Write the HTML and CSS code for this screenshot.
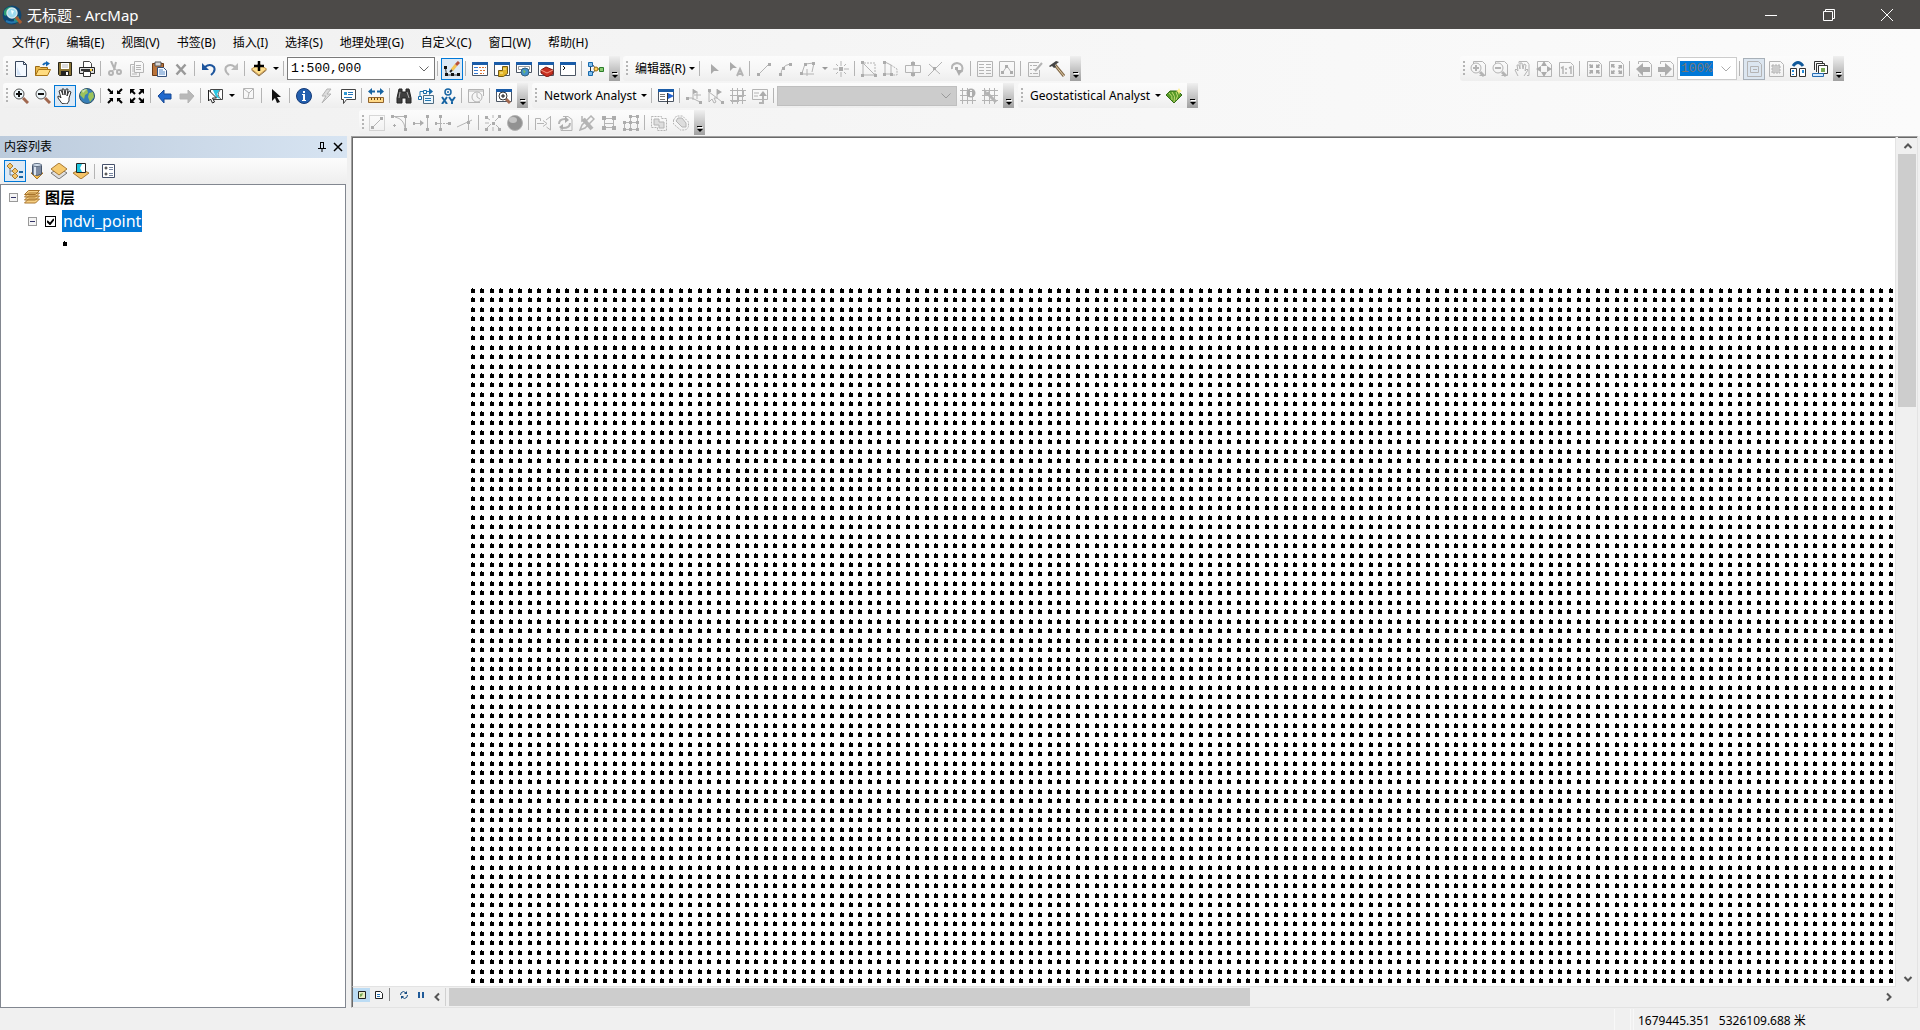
FILE: index.html
```html
<!DOCTYPE html>
<html lang="zh-CN">
<head>
<meta charset="utf-8">
<title>无标题 - ArcMap</title>
<link rel="stylesheet" href="styles.css">
</head>
<body>
<header class="titlebar">
  <svg class="app-icon" viewBox="0 0 20 20"><circle cx="10" cy="10" r="9.500" fill="#0d4672"/><path d="M2 6q4-5 8-4l-3 4-3 5-2-1zM12 14l5-3-1 6-4 1z" fill="#2a9a72"/><path d="M4 16q6 3 10 0" stroke="#2777b0" stroke-width="2"/><circle cx="10" cy="8" r="5" fill="#9edcf0" stroke="#d4e8ec" stroke-width="1.500"/><path d="M9 5l3 1-2 4z" fill="#f4ffff"/><path d="M14 12l5 6" stroke="#a85e34" stroke-width="3"/></svg>
  <h1>无标题 - ArcMap</h1>
  <div class="window-buttons">
    <button aria-label="最小化"><svg viewBox="0 0 12 12"><path d="M0 6.500h12"/></svg></button>
    <button aria-label="还原"><svg viewBox="0 0 12 12"><path d="M.5 2.500h9v9h-9zM2.500 2V.5h9v9H10"/></svg></button>
    <button aria-label="关闭"><svg viewBox="0 0 12 12"><path d="M0 0l12 12M12 0L0 12"/></svg></button>
  </div>
</header>

<nav class="menubar">
  <button>文件(F)</button><button>编辑(E)</button><button>视图(V)</button><button>书签(B)</button><button>插入(I)</button><button>选择(S)</button><button>地理处理(G)</button><button>自定义(C)</button><button>窗口(W)</button><button>帮助(H)</button>
</nav>

<section class="docks">
  <div class="dock">
    <div class="toolbar">
      <span class="grip"></span>
      <button class="tool" aria-label="新建"><svg viewBox="0 0 16 16"><path d="M2.500.5h8l3 3v12h-11z" fill="#f4f9ff" stroke="#39475c"/><path d="M10.500.5v3h3" stroke="#39475c"/><path d="M4 14V6l4 8z" fill="#d4e4f7"/></svg></button>
      <button class="tool" aria-label="打开"><svg viewBox="0 0 16 16"><path d="M.5 14.500v-9h4l1 1h7v3" fill="#e9b94d" stroke="#9b6a14"/><path d="M.5 14.500l3-6h12l-3 6z" fill="#ffdc80" stroke="#a87417"/><path d="M8 4q1-2 4-2" stroke="#1266b4" stroke-width="2"/><path d="M11 0l4 2.500-4 3z" fill="#1266b4"/></svg></button>
      <button class="tool" aria-label="保存"><svg viewBox="0 0 16 16"><path d="M1.500 1.500h13v13h-12l-1-1z" fill="#8b7536" stroke="#28251a"/><path d="M4 2h8v6H4z" fill="#fff"/><path d="M5 4h6M5 6h6" stroke="#b9b9b9"/><path d="M4 10h8v4H4z" fill="#222"/><path d="M9 11h2v3H9z" fill="#fff"/></svg></button>
      <button class="tool" aria-label="打印"><svg viewBox="0 0 16 16"><path d="M4.500 7V.5h6l2 2V7" fill="#fff" stroke="#444"/><path d="M.5 6.500h15v6H.5z" fill="#ddd" stroke="#222"/><path d="M2 9h12" stroke="#333" stroke-width="2"/><path d="M11 8h2v2h-2z" fill="#f5cf46"/><path d="M4.500 10.500h7v5h-7z" fill="#fff" stroke="#333"/></svg></button>
      <span class="sep"></span>
      <button class="tool" disabled aria-label="剪切"><svg viewBox="0 0 16 16"><path d="M4 0l4 9M9 1L7 9" stroke-width="2"/><circle cx="4" cy="12" r="2" stroke-width="2"/><circle cx="12" cy="11" r="2" stroke-width="2"/><path d="M5 10l3-2 3 2"/></svg></button>
      <button class="tool" disabled aria-label="复制"><svg viewBox="0 0 16 16"><path d="M5.500.5h7l2 2v9h-9zM5 3.500H1.500v12h9V12M3 6h2M3 8h2M3 10h2M7 4.500h5M7 6.500h5M7 8.500h5M3 13h5"/></svg></button>
      <button class="tool" aria-label="粘贴"><svg viewBox="0 0 16 16"><path d="M1.500 2.500h11v12h-11z" fill="#b9733a" stroke="#6b3b16"/><path d="M4 1h6v4H4z" fill="#d9d9d9" stroke="#555"/><path d="M6.500 6.500h6l3 3v6h-9z" fill="#f4f9ff" stroke="#35507a"/><path d="M8 9h4M8 11h6M8 13h6" stroke="#5b8cc8"/></svg></button>
      <button class="tool" disabled aria-label="删除"><svg viewBox="0 0 16 16"><path d="M3.500 3.500l9 10M12.500 3.500l-9 10" stroke="#999" stroke-width="2.500"/></svg></button>
      <span class="sep"></span>
      <button class="tool" aria-label="撤消"><svg viewBox="0 0 16 16"><path d="M4 6q5-4 9 0 2 4-3 8" stroke="#1d559d" stroke-width="2"/><path d="M1 2v7h7z" fill="#1d559d"/></svg></button>
      <button class="tool" disabled aria-label="重做"><svg viewBox="0 0 16 16"><path d="M12 6q-5-4-9 0-2 4 3 8" stroke-width="2"/><path d="M15 2v7H8z" fill="#bbb" stroke="none"/></svg></button>
      <span class="sep"></span>
      <button class="tool" aria-label="添加数据"><svg viewBox="0 0 16 16"><path d="M.5 8L8 3l7.500 5L8 14z" fill="#ffdf8d" stroke="#c39347"/><path d="M.5 9L8 15l7.500-6" stroke="#8d6b3b"/><path d="M8 0v10M3 5h10" stroke="#000" stroke-width="2.500"/></svg></button>
      <button class="drop" aria-label="添加数据选项"></button>
      <span class="sep"></span>
      <select class="combo scale" aria-label="比例尺"><option>1:500,000</option></select>
      <span class="sep"></span>
      <button class="tool on" aria-label="编辑器工具条"><svg viewBox="0 0 16 16"><path d="M1.500 7l1 7h11" stroke="#444"/><path d="M0 5h3v3H0zM1 12h3v3H1zM7 12h3v3H7zM13 12h3v3h-3z" fill="#111"/><path d="M8 9l4-5" stroke="#f4c454" stroke-width="3"/><path d="M12 4l3-3" stroke="#b85038" stroke-width="3"/><path d="M6 11l2-2" stroke="#222" stroke-width="2"/></svg></button>
      <span class="sep"></span>
      <button class="tool" aria-label="内容列表"><svg viewBox="0 0 16 16"><path class="win" d="M.5 1.500h15v13H.5z"/><path class="bar" d="M0 2.500h16"/><path d="M2 6.500h4M2 9.500h4M2 12.500h4" stroke="#3478d0"/><path d="M7 6.500h7M8 9.500h6M8 12.500h4" stroke="#d87334" stroke-dasharray="2 1"/></svg></button>
      <button class="tool" aria-label="目录"><svg viewBox="0 0 16 16"><path class="win" d="M.5 1.500h15v13H.5z"/><path class="bar" d="M0 2.500h16"/><path d="M4.500 9.500h4v-4h5v7l-4 3h-5z" fill="#e3b62b" stroke="#755b12"/><path d="M9 8h3M6 12h3" stroke="#fff3a8"/></svg></button>
      <button class="tool" aria-label="搜索"><svg viewBox="0 0 16 16"><path class="win" d="M.5 1.500h15v10H.5z"/><path class="bar" d="M0 2.500h16"/><path d="M2.500 5.500h11v3h-11z" fill="#fff" stroke="#999"/><circle cx="9" cy="11" r="4" fill="#4391ca" stroke="#32617f"/><path d="M7 9l3 1-2 3z" fill="#72bc68"/></svg></button>
      <button class="tool" aria-label="工具箱"><svg viewBox="0 0 16 16"><path class="win" d="M.5 1.500h15v13H.5z"/><path class="bar" d="M0 2.500h16"/><path d="M3 9l5-3 7 3v4l-6 3-6-4z" fill="#c92f20" stroke="#7f1a13"/><path d="M3 9l6 3 6-3" stroke="#f49b84"/></svg></button>
      <button class="tool" aria-label="Python"><svg viewBox="0 0 16 16"><path class="win" d="M.5 1.500h15v13H.5z"/><path class="bar" d="M0 2.500h16"/><path d="M3 5l2 2-2 2" stroke="#111"/></svg></button>
      <span class="sep"></span>
      <button class="tool" aria-label="模型构建器"><svg viewBox="0 0 16 16"><path d="M2.500 3v10M4 3l4 5h4M4 13l4-5" stroke="#333"/><path d="M.5 1.500h4v4h-4zM.5 10.500h4v4h-4z" fill="#83bdea" stroke="#176aad"/><circle cx="8" cy="8" r="2" fill="#ffd05a" stroke="#9a6c0e"/><path d="M11.500 6.500h4v4h-4z" fill="#8acc73" stroke="#2a7c28"/></svg></button>
      <button class="more" aria-label="工具条选项"></button>
    </div>
    <div class="toolbar">
      <span class="grip"></span>
      <button class="label editor">编辑器(R)</button>
      <span class="sep"></span>
      <button class="tool" disabled aria-label="编辑工具"><svg viewBox="0 0 16 16"><path d="M5 3v10l3-3h5z" fill="#aaa" stroke="none"/></svg></button>
      <button class="tool" disabled aria-label="编辑注记"><svg viewBox="0 0 16 16"><path d="M2 1v9l3-3h4z" fill="#aaa" stroke="none"/><path d="M9 15l3-7 3 7M10 13h4" stroke-width="2"/></svg></button>
      <span class="sep"></span>
      <button class="tool" disabled aria-label="直线段"><svg viewBox="0 0 16 16"><path d="M3 13L13 3"/><path class="node" d="M1 12h3v3H1zM12 2h3v3h-3z"/></svg></button>
      <button class="tool" disabled aria-label="弧段"><svg viewBox="0 0 16 16"><path d="M3 13Q3 5 12 3"/><path class="node" d="M1 12h3v3H1zM11 2h3v3h-3zM4 6h3v3H4z"/></svg></button>
      <button class="tool" disabled aria-label="追踪"><svg viewBox="0 0 16 16"><path d="M2 12l3-9 9-1-2 9M1 13h13M7 8v7"/><path class="node" d="M0 11h3v3H0zM4 2h3v3H4zM12 1h3v3h-3z"/></svg></button>
      <button class="drop" disabled aria-label="构造工具"></button>
      <button class="tool" disabled aria-label="点"><svg viewBox="0 0 16 16"><path class="node" d="M6 6h4v4H6z"/><path d="M8 0v5M8 11v5M0 8h5M11 8h5M3 3l2 2M11 11l2 2M13 3l-2 2M3 13l2-2"/></svg></button>
      <span class="sep"></span>
      <button class="tool" disabled aria-label="编辑折点"><svg viewBox="0 0 16 16"><path d="M2 2v12h12zM2 2l12 12"/><path d="M3 2h11v11" stroke-dasharray="2 1"/><path class="node" d="M0 0h3v3H0zM0 13h3v3H0zM13 13h3v3h-3z"/></svg></button>
      <button class="tool" disabled aria-label="整形要素"><svg viewBox="0 0 16 16"><path d="M2 1v12h6V4z"/><path d="M8 4l6 4v6H8" stroke-dasharray="2 1"/><path class="node" d="M0 0h3v3H0zM0 12h3v3H0zM7 12h3v3H7z"/></svg></button>
      <button class="tool" disabled aria-label="裁剪面"><svg viewBox="0 0 16 16"><path d="M.5 4.500h15v7H.5zM8 0v16"/><path class="node" d="M6 1h4v3H6zM6 12h4v3H6z"/></svg></button>
      <button class="tool" disabled aria-label="分割"><svg viewBox="0 0 16 16"><path d="M1 15L15 1M2 3l11 10"/><path class="node" d="M6 6h3v3H6z"/></svg></button>
      <button class="tool" disabled aria-label="旋转"><svg viewBox="0 0 16 16"><path d="M3 8q-1-5 5-6 7 1 5 8l-3 2" stroke-width="2"/><path class="node" d="M7 9h6l-3 6zM6 6h3v3H6z"/></svg></button>
      <span class="sep"></span>
      <button class="tool" disabled aria-label="属性"><svg viewBox="0 0 16 16"><path d="M.5.5h15v15H.5zM2 3.500h5M2 6.500h5M2 9.500h5M2 12.500h5M9 3.500h5M9 6.500h5M9 9.500h5M9 12.500h5"/></svg></button>
      <button class="tool" disabled aria-label="草图属性"><svg viewBox="0 0 16 16"><path d="M.5.5h15v15H.5zM4 11l4-6 4 6"/><path class="node" d="M2 10h3v3H2zM6 4h3v3H6zM11 10h3v3h-3z"/></svg></button>
      <span class="sep"></span>
      <button class="tool" disabled aria-label="创建要素"><svg viewBox="0 0 16 16"><path d="M12 1.500H1.500v14h11V9M3 4.500h2M3 8.500h2M3 12.500h2M6 4.500h4M6 8.500h3M6 12.500h5"/><path d="M8 10l7-8" stroke-width="2"/></svg></button>
      <button class="tool" aria-label="工具"><svg viewBox="0 0 16 16"><path d="M6 4l9 11" stroke="#846a4a" stroke-width="3"/><path d="M6 4l9 11" stroke="#e5d4b0"/><path d="M0 5l7-5 3 1-4 3 1 2-2 1-2-2-2 1z" fill="#454545"/></svg></button>
      <button class="more" aria-label="工具条选项"></button>
    </div>
    <div class="toolbar layout-bar">
      <span class="grip"></span>
      <button class="tool" disabled aria-label="放大布局"><svg viewBox="0 0 16 16"><path d="M3.500 3V.5h9l3 3v11h-6"/><circle cx="6" cy="7" r="5"/><path d="M3 7h6M6 4v6" stroke-width="2"/><path d="M10 11l4 4" stroke-width="3"/></svg></button>
      <button class="tool" disabled aria-label="缩小布局"><svg viewBox="0 0 16 16"><path d="M3.500 3V.5h9l3 3v11h-6"/><circle cx="6" cy="7" r="5"/><path d="M3 7h6" stroke-width="2"/><path d="M10 11l4 4" stroke-width="3"/></svg></button>
      <button class="tool" disabled aria-label="平移布局"><svg viewBox="0 0 16 16"><path d="M5 2.500V.5h8l2 3v11h-2M4 15L1 9l1-1 2 2-1-6h2l1 4V2h2l1 6 1-5 2 1-1 6 2-2 1 1-4 6"/></svg></button>
      <button class="tool" disabled aria-label="缩放整个页面"><svg viewBox="0 0 16 16"><path d="M1.500.5h11l3 3v12h-14z"/><path class="node" d="M5 5l3-5 3 5zM5 11l3 5 3-5zM5 5L0 8l5 3zM11 5l5 3-5 3z"/></svg></button>
      <button class="tool" disabled aria-label="1:1"><svg viewBox="0 0 16 16"><path d="M1.500 1.500h11l3 3v11h-14z"/><path d="M3 7l2-1v7M11 7l2-1v7M8 7v2M8 11v2" stroke-width="1.500"/></svg></button>
      <span class="sep"></span>
      <button class="tool" disabled aria-label="固定比例放大"><svg viewBox="0 0 16 16"><path d="M1.500.5h11l3 3v12h-14z"/><path class="node" d="M7 3v4H3l1-1-1-2 1-1 2 1zM10 3v4h4l-1-1 1-2-1-1-2 1zM7 13V9H3l1 1-1 2 1 1 2-1zM10 13V9h4l-1 1 1 2-1 1-2-1z"/></svg></button>
      <button class="tool" disabled aria-label="固定比例缩小"><svg viewBox="0 0 16 16"><path d="M1.500.5h11l3 3v12h-14z"/><path class="node" d="M3 3h4L6 4l1 2-1 1-2-1-1 1zM14 4v4l-1-1-2 1-1-1 1-2-1-1zM3 13V9l1 1 2-1 1 1-1 2 1 1zM14 13h-4l1-1-1-2 1-1 2 1 1-1z"/></svg></button>
      <span class="sep"></span>
      <button class="tool" disabled aria-label="上一范围"><svg viewBox="0 0 16 16"><path d="M2.500 3V.5h10l3 3v12h-13V13"/><path class="node" d="M0 8l7-6v4h7v5H7v4z"/></svg></button>
      <button class="tool" disabled aria-label="下一范围"><svg viewBox="0 0 16 16"><path d="M2.500 3V.5h10l3 3v12h-13V13"/><path class="node" d="M14 8L7 2v4H0v5h7v4z"/></svg></button>
      <select class="combo percent" disabled aria-label="缩放百分比"><option>100%</option></select>
      <span class="sep"></span>
      <button class="tool on-disabled" disabled aria-label="切换描绘模式"><svg viewBox="0 0 16 16"><path d="M1.500.5h11l3 3v12h-14zM4.500 5.500h8v6h-8zM7 8.500h4"/></svg></button>
      <button class="tool" disabled aria-label="焦点数据框"><svg viewBox="0 0 16 16"><path d="M1.500.5h11l3 3v12h-14z"/><path d="M4 4h8v8H4z" fill="#ccc" stroke-dasharray="2 1"/></svg></button>
      <button class="tool" aria-label="更改布局"><svg viewBox="0 0 16 16"><path d="M3 5q5-7 10 0" stroke="#12599a" stroke-width="3"/><path d="M.5 7.500h6v8h-6zM9.500 7.500h6v8h-6z" fill="#fff" stroke="#333"/><path d="M2 9h2v2H2zM2 13h2v1H2zM12 9h2v3h-2z" fill="#268ad8"/></svg></button>
      <button class="tool" aria-label="数据驱动页面"><svg viewBox="0 0 16 16"><path d="M2.500 9V.5h8V3M4.500 11V2.500h8V5" stroke="#333"/><path d="M6.500 4.500h9v8h-9z" fill="#fff" stroke="#333"/><path d="M9 7h4v4H9z" fill="#79a953"/><path d="M.5 12.500h11v3H.5z" fill="#d2e9ff" stroke="#286db1"/></svg></button>
      <button class="more" aria-label="工具条选项"></button>
    </div>
  </div>

  <div class="dock second">
    <div class="toolbar">
      <span class="grip"></span>
      <button class="tool" aria-label="放大"><svg viewBox="0 0 16 16"><path d="M10 10l5 5" stroke="#a0674e" stroke-width="3"/><circle cx="6" cy="6" r="5" fill="#eef7fb" stroke="#555"/><path d="M3 6h6M6 3v6" stroke="#111" stroke-width="2"/></svg></button>
      <button class="tool" aria-label="缩小"><svg viewBox="0 0 16 16"><path d="M10 10l5 5" stroke="#a0674e" stroke-width="3"/><circle cx="6" cy="6" r="5" fill="#eef7fb" stroke="#555"/><path d="M3 6h6" stroke="#111" stroke-width="2"/></svg></button>
      <button class="tool on" aria-label="平移"><svg viewBox="0 0 16 16"><path d="M5 15.500L1 10V8l2 1 1 1-2-7 2-1 2 5-1-6h2l1 6 1-6h2l-1 7 2-5 2 1-2 6v3l-2 3z" fill="#fff" stroke="#333"/></svg></button>
      <button class="tool" aria-label="全图"><svg viewBox="0 0 16 16"><circle cx="8" cy="8" r="7.500" fill="#377fb8" stroke="#2f526a"/><path d="M3 2l5-1 1 4-3 2-1 4-4-4zM10 5l4-1 1 5-4 5-2-5z" fill="#9cc35b"/><path d="M3 3q2-2 5-2L4 5z" fill="#fff" opacity=".5"/></svg></button>
      <span class="sep"></span>
      <button class="tool" aria-label="固定比例放大"><svg viewBox="0 0 16 16"><path d="M1 1l4 4M15 1l-4 4M1 15l4-4M15 15l-4-4" stroke="#000" stroke-width="2"/><path d="M6 2v4H2zM10 2v4h4zM6 14v-4H2zM10 14v-4h4z" fill="#000"/></svg></button>
      <button class="tool" aria-label="固定比例缩小"><svg viewBox="0 0 16 16"><path d="M2 2l4 4M14 2l-4 4M2 14l4-4M14 14l-4-4" stroke="#000" stroke-width="2"/><path d="M1 1h5L1 6zM15 1v5l-5-5zM1 15v-5l5 5zM15 15h-5l5-5z" fill="#000"/></svg></button>
      <span class="sep"></span>
      <button class="tool" aria-label="返回"><svg viewBox="0 0 16 16"><path d="M1 8l6-6v4h7v5H7v4z" fill="#2169cd" stroke="#174893"/></svg></button>
      <button class="tool" disabled aria-label="前进"><svg viewBox="0 0 16 16"><path d="M15 8L9 2v4H1v5h8v4z" fill="#b8b8b8"/></svg></button>
      <span class="sep"></span>
      <button class="tool" aria-label="选择要素"><svg viewBox="0 0 16 16"><path d="M3.500 1.500h12v10h-12z" fill="#fff" stroke="#444"/><path d="M6 2h7l-3 4 3 5-4-2z" fill="#29c5e1"/><path d="M13 2q-4 5 1 9" stroke="#777"/><path d="M1.500 2v11l2-2 2 4 2-1-2-4h4z" fill="#fff" stroke="#222"/></svg></button>
      <button class="drop" aria-label="选择要素选项"></button>
      <button class="tool clear" disabled aria-label="清除所选"><svg viewBox="0 0 16 16"><path d="M3.500.5h10v10h-10zM4 1l5 4-1 5M9 5l4-4"/></svg></button>
      <span class="sep"></span>
      <button class="tool" aria-label="选择元素"><svg viewBox="0 0 16 16"><path d="M4 1v12l3-3 2 5 3-1-3-5h4z" fill="#111"/></svg></button>
      <span class="sep"></span>
      <button class="tool" aria-label="识别"><svg viewBox="0 0 16 16"><circle cx="8" cy="8" r="7.500" fill="#235fae" stroke="#153b78"/><path d="M7 3h2v2H7zM6 6h3v6h1v1H6v-1h1V7H6z" fill="#fff"/></svg></button>
      <button class="tool" disabled aria-label="超链接"><svg viewBox="0 0 16 16"><path d="M9 1L4 8h4l-4 7 9-9H9l4-5z" fill="#ddd"/></svg></button>
      <button class="tool" aria-label="HTML 弹出窗口"><svg viewBox="0 0 16 16"><path d="M1.500 1.500h14v10h-9l-3 4v-4h-2z" fill="#fff" stroke="#444"/><path d="M4 4h3v3H4z" fill="#2f9ad5"/><path d="M8 4.500h5M8 6.500h5M4 9.500h8" stroke="#2474b6"/></svg></button>
      <span class="sep"></span>
      <button class="tool" aria-label="测量"><svg viewBox="0 0 16 16"><path d="M2 3.500h12" stroke="#1764a3" stroke-dasharray="5 2" stroke-width="2"/><path d="M0 3.500L4 0v7zM16 3.500L12 0v7z" fill="#1764a3"/><path d="M.5 9.500h15v5H.5z" fill="#ffd987" stroke="#91632c"/><path d="M3.500 10v2M6.500 10v2M9.500 10v2M12.500 10v2" stroke="#654317"/></svg></button>
      <span class="sep"></span>
      <button class="tool" aria-label="查找"><svg viewBox="0 0 16 16"><path d="M3 1h3v3h4V1h3l2 9v5h-5v-5H6v5H1v-5z" fill="#3e3e3e" stroke="#222"/><path d="M4 4l-1 6M11 4l2 6" stroke="#aaa"/></svg></button>
      <button class="tool" aria-label="查找路径"><svg viewBox="0 0 16 16"><path d="M2 9V3.500h10" stroke="#2478b1"/><path d="M11 0l4 3.500-4 3.500z" fill="#176aa7"/><path d="M.5 8.500h3v3h-3zM5.500 2.500h3v3h-3z" fill="#fff" stroke="#176aa7"/><path d="M5.500 7.500h10v8h-10z" fill="#edf7fd" stroke="#4f6b80"/><path d="M7 10.500h6M7 12.500h6" stroke="#2478b1"/></svg></button>
      <button class="tool" aria-label="转到 XY"><svg viewBox="0 0 16 16"><circle cx="8" cy="4" r="3" stroke="#1764a3" stroke-width="1.500"/><circle cx="8" cy="4" r="1" fill="#1764a3"/><path d="M2 9l5 7M7 9l-5 7M9 9l3 4 3-4M12 12v4" stroke="#1764a3" stroke-width="2"/></svg></button>
      <span class="sep"></span>
      <button class="tool" disabled aria-label="时间滑块"><svg viewBox="0 0 16 16"><path d="M12 14.500H.5v-13h15V8M0 3h16"/><circle cx="9" cy="9" r="5"/><path d="M9 5v4l3 2"/></svg></button>
      <span class="sep"></span>
      <button class="tool" aria-label="创建查看器窗口"><svg viewBox="0 0 16 16"><path class="win" d="M.5 1.500h15v12H.5z"/><path class="bar" d="M0 2.500h16"/><path d="M10 11l4 4" stroke="#a0674e" stroke-width="3"/><circle cx="7" cy="8" r="4" fill="#fff" stroke="#333"/><path d="M5 8h4M7 6v4" stroke="#111"/></svg></button>
      <button class="more" aria-label="工具条选项"></button>
    </div>
    <div class="toolbar">
      <span class="grip"></span>
      <button class="label network">Network Analyst</button>
      <span class="sep"></span>
      <button class="tool" aria-label="Network Analyst 窗口"><svg viewBox="0 0 16 16"><path class="win" d="M.5 1.500h15v12H.5z"/><path class="bar" d="M0 2.500h16"/><path d="M2 6.500h5M2 8.500h5M2 11.500h5" stroke="#777"/><path d="M9.500 5v11" stroke="#333"/><path d="M10 5l6 3-6 3z" fill="#2264d1"/></svg></button>
      <span class="sep"></span>
      <button class="tool" disabled aria-label="创建网络位置"><svg viewBox="0 0 16 16"><path d="M1 10h5l8 4M7 12V1M11 4v7M8 7h7"/><path class="node" d="M0 9h3v3H0zM7 1l5 3-5 2zM13 13h3v3h-3z"/></svg></button>
      <button class="tool" disabled aria-label="选择网络位置"><svg viewBox="0 0 16 16"><path d="M1 4v10l3-3 2 4 2-1-2-4h3zM9 10V1M9 10l5 4"/><path class="node" d="M9 1l5 3-5 3zM13 13h3v3h-3zM0 1h3v3H0z"/></svg></button>
      <button class="tool" disabled aria-label="求解"><svg viewBox="0 0 16 16"><path d="M0 2.500h16M0 7.500h16M0 12.500h16M2.500 0v16M7.500 0v16M12.500 0v16"/><path d="M1 13h7V8h5V2" stroke-width="2"/></svg></button>
      <button class="tool" disabled aria-label="方向"><svg viewBox="0 0 16 16"><path d="M.5 1.500h15v10H.5zM2 5h5M2 8h4"/><path d="M7 15h4V8" stroke-width="2"/><path class="node" d="M7 8l4-5 4 5z"/></svg></button>
      <span class="sep"></span>
      <select class="combo dataset" disabled aria-label="网络数据集"><option></option></select>
      <button class="tool" disabled aria-label="网络识别"><svg viewBox="0 0 16 16"><path d="M0 2.500h7M0 7.500h14M0 12.500h16M2.500 0v16M7.500 0v16M12.500 9v7"/><circle class="node" cx="11" cy="5" r="4.500"/><path d="M11 2v1M11 4v4" stroke="#f5f5f5" stroke-width="2"/></svg></button>
      <button class="tool" disabled aria-label="构建网络"><svg viewBox="0 0 16 16"><path d="M0 2.500h16M0 7.500h16M0 12.500h16M2.500 0v16M7.500 0v16M12.500 0v16"/><path d="M5 5l9 9" stroke-width="3"/><path d="M3 2l1 4 3-2" stroke-width="2"/></svg></button>
      <button class="more" aria-label="工具条选项"></button>
    </div>
    <div class="toolbar">
      <span class="grip"></span>
      <button class="label geo">Geostatistical Analyst</button>
      <button class="tool" aria-label="地统计向导"><svg viewBox="0 0 16 16"><path d="M0 7l4-4h8l4 4-8 8z" fill="#579b28" stroke="#356c16"/><path d="M3 5q4 3 3 7M6 4q4 4 2 10M10 4q3 4 0 8" stroke="#c5dc75"/><path d="M13 0l1 2 2 1-2 1-1 3-1-3-2-1 2-1z" fill="#fff18a"/></svg></button>
      <button class="more" aria-label="工具条选项"></button>
    </div>
  </div>

  <div class="dock advanced">
    <div class="toolbar">
      <span class="grip"></span>
      <button class="tool" disabled aria-label="复制要素"><svg viewBox="0 0 16 16"><path d="M.5.5h15v15H.5z" stroke-dasharray="1 1"/><path d="M4 12l8-8"/><path class="node" d="M2 11h3v3H2zM11 2h3v3h-3z"/></svg></button>
      <button class="tool" disabled aria-label="内圆角"><svg viewBox="0 0 16 16"><path d="M2 1.500h12.500v12M4 2q9 2 10 11"/><path class="node" d="M0 0h3v3H0zM13 0h3v3h-3zM13 13h3v3h-3zM3 9h1v3H3zM2 10h3v1H2z"/></svg></button>
      <button class="tool" disabled aria-label="延伸"><svg viewBox="0 0 16 16"><path d="M0 8.500h10M14.500 2v12"/><path class="node" d="M7 5l4 3-4 3zM13 0h3v3h-3zM13 13h3v3h-3zM0 7h2v3H0z"/></svg></button>
      <button class="tool" disabled aria-label="修剪"><svg viewBox="0 0 16 16"><path d="M0 8.500h7M5.500 1v14"/><path d="M8 8.500h7" stroke-dasharray="2 1"/><path class="node" d="M4 0h3v3H4zM4 13h3v3H4zM13 7h3v3h-3zM0 7h2v3H0z"/></svg></button>
      <button class="tool" disabled aria-label="线相交"><svg viewBox="0 0 16 16"><path d="M0 12l15-7M11.500 0v15"/><path class="node" d="M10 6h3v3h-3z"/></svg></button>
      <span class="sep"></span>
      <button class="tool" disabled aria-label="拆分多部件"><svg viewBox="0 0 16 16"><path d="M1 2l4 3M15 1l-5 5M1 14l5-5M15 14l-4-4M8 0v3M8 12v4M0 8h4"/><path class="node" d="M0 1h3v3H0zM13 0h3v3h-3zM0 13h3v3H0zM13 13h3v3h-3zM7 7h3v3H7z"/></svg></button>
      <button class="tool" disabled aria-label="构造大地测量要素"><svg viewBox="0 0 16 16"><circle cx="8" cy="8" r="7.500" fill="#929292"/><ellipse cx="6" cy="5" rx="4" ry="3" fill="#c4c4c4" stroke="none"/></svg></button>
      <span class="sep"></span>
      <button class="tool" disabled aria-label="对齐至形状"><svg viewBox="0 0 16 16"><path d="M.5 15V3.500h5V6M2 8.500h7M8 5.500l4 3-4 3M15.500 1v14l-4-3M11 5l4-3"/></svg></button>
      <button class="tool" disabled aria-label="替换几何"><svg viewBox="0 0 16 16"><path d="M6 1.500h5l4 3v11H4v-3"/><path d="M2 9q0-5 6-5M13 8q0 5-7 5" stroke-width="2"/><path class="node" d="M8 1l4 4-4 3zM6 9v6l-4-3z"/></svg></button>
      <button class="tool" disabled aria-label="构造面"><svg viewBox="0 0 16 16"><path d="M4 4l9 10" stroke-width="4"/><path d="M3 1v5l4-2M12 1L3 10l-2 5 5-2 9-9z" stroke-width="1.500"/></svg></button>
      <button class="tool" disabled aria-label="分割面"><svg viewBox="0 0 16 16"><path d="M3 3.500h10M3 12.500h10M3.500 1v14M12.500 1v14M3 8.500h10"/><path class="node" d="M1 1h4v4H1zM11 1h4v4h-4zM1 11h4v4H1zM11 11h4v4h-4z"/></svg></button>
      <button class="tool" disabled aria-label="概化"><svg viewBox="0 0 16 16"><path d="M1.500 7.500h13v7h-13zM7.500 1.500h7v13h-7z"/><path class="node" d="M0 6h3v3H0zM6 0h3v3H6zM13 0h3v3h-3zM6 6h3v3H6zM13 6h3v3h-3zM0 13h3v3H0zM6 13h3v3H6zM13 13h3v3h-3z"/></svg></button>
      <span class="sep"></span>
      <button class="tool" disabled aria-label="平滑"><svg viewBox="0 0 16 16"><path d="M.5 1.500h10v2h5v12h-9v-3h-6z" stroke-dasharray="2 1"/><path d="M3 4h5v3h5v6H8v-3H3z" fill="#ddd"/></svg></button>
      <button class="tool" disabled aria-label="缓冲"><svg viewBox="0 0 16 16"><path d="M.5 5l3-4h6l6 6v5l-3 3h-5l-7-6z" stroke-dasharray="2 1"/><path d="M3 6l2-3h4l4 5v4H9z" fill="#ddd"/></svg></button>
      <button class="more" aria-label="工具条选项"></button>
    </div>
  </div>
</section>

<main class="workspace">
  <aside class="contents">
    <div class="contents-title"><h2>内容列表</h2>
      <button aria-label="自动隐藏"><svg viewBox="0 0 10 10"><path d="M3 .5h4M3.500 1v5M6.500 0v6M1 6.500h8M5 7v3" stroke="#000"/></svg></button>
      <button aria-label="关闭内容列表"><svg viewBox="0 0 10 10"><path d="M1 1l8 8M9 1L1 9" stroke="#000" stroke-width="1.500"/></svg></button>
    </div>
    <div class="contents-tools">
      <button class="tool on" aria-label="按绘制顺序列出"><svg viewBox="0 0 16 16"><path d="M3 3v9h5M3 8h5" stroke="#708090"/><path d="M3 0l3 3-3 3-3-3zM8 5l3 3-3 3-3-3zM8 10l3 3-3 3-3-3z" fill="#f4c568" stroke="#a77a31"/><path d="M12 9h4M12 14h4" stroke="#1764a3" stroke-width="2"/></svg></button>
      <button class="tool" aria-label="按源列出"><svg viewBox="0 0 16 16"><path d="M2 10l6 6 6-6z" fill="#f3bd52" stroke="#a87527"/><path d="M3.500 2h9v9q-4 3-9 0z" fill="#7e8ba1" stroke="#47556b"/><path d="M6 3v9" stroke="#dbe4ef" stroke-width="2"/><ellipse cx="8" cy="2" rx="4.500" ry="1.500" fill="#d8e4f2" stroke="#5f6d80"/></svg></button>
      <button class="tool" aria-label="按可见性列出"><svg viewBox="0 0 16 16"><path d="M0 10l8-5 8 5-8 6z" fill="#dedede" stroke="#777"/><path d="M0 6l8-6 8 6-8 6z" fill="#f7ca6e" stroke="#a87a35"/></svg></button>
      <button class="tool" aria-label="按选择列出"><svg viewBox="0 0 16 16"><path d="M0 10l8-4 8 4-8 6z" fill="#f6c467" stroke="#a87a35"/><path d="M3.500.5h9v9h-9z" fill="#fff" stroke="#222"/><path d="M4 1h5l-2 4 2 4H4z" fill="#1cc4dc"/></svg></button>
      <span class="sep"></span>
      <button class="tool" aria-label="选项"><svg viewBox="0 0 16 16"><path d="M1.500 1.500h12v13h-12z" fill="#fff" stroke="#45506a"/><circle cx="5" cy="5" r="1" stroke="#222"/><circle cx="5" cy="11" r="1" stroke="#222"/><path d="M8 4.500h4M8 6.500h4M8 10.500h4M8 12.500h4" stroke="#7785a0"/></svg></button>
    </div>
    <div class="tree">
      <div class="node-row root">
        <button class="fold" aria-label="折叠图层"></button>
        <svg class="layers" viewBox="0 0 16 14"><path d="M.5 13l4-4h11l-4 4zM.5 10l4-4h11l-4 4zM.5 7l4-4h11l-4 4zM.5 4.500l4-4h11l-4 4z" fill="#f7d083" stroke="#a8742c"/></svg>
        <strong>图层</strong>
      </div>
      <div class="node-row child">
        <button class="fold" aria-label="折叠 ndvi_point"></button>
        <input type="checkbox" id="ndvi" checked>
        <label for="ndvi">ndvi_point</label>
      </div>
      <div class="node-row symbol"><svg viewBox="0 0 4 5"><path d="M0 1h1V0h1v1h2v4H0z" fill="#000"/></svg></div>
    </div>
  </aside>

  <section class="map-frame">
    <div class="map-row">
      <div class="map"><canvas id="points"></canvas></div>
      <div class="vscroll">
        <button aria-label="向上滚动"><svg viewBox="0 0 10 10"><path d="M1.500 7L5 3.500 8.500 7"/></svg></button>
        <div class="track"><div class="thumb"></div></div>
        <button aria-label="向下滚动"><svg viewBox="0 0 10 10"><path d="M1.500 3L5 6.500 8.500 3"/></svg></button>
      </div>
    </div>
    <div class="hscroll">
      <button class="view current" aria-label="数据视图"><svg viewBox="0 0 8 8"><path d="M.5.5h7v7h-7z" fill="#e8efc4" stroke="#222"/><path d="M2 6V3l3-1-1 3z" fill="#78a957"/></svg></button>
      <button class="view" aria-label="布局视图"><svg viewBox="0 0 8 8"><path d="M.5.5h5l2 2v5h-7z" fill="#fff" stroke="#222"/><path d="M2 3.500h3M2 5.500h3" stroke="#2674b7"/></svg></button>
      <span class="view-sep"></span>
      <button class="view" aria-label="刷新"><svg viewBox="0 0 8 8"><path d="M.5 4q0-3 3-3.500L6 2M7.500 4q0 3-3 3.500L2 6" stroke="#174c80"/><path d="M7 0v3H4zM1 8V5h3z" fill="#174c80"/></svg></button>
      <button class="view" aria-label="暂停绘制"><svg viewBox="0 0 8 8"><path d="M2 1v6M6 1v6" stroke="#205b99" stroke-width="2"/></svg></button>
      <button class="scroll-left" aria-label="向左滚动"><svg viewBox="0 0 10 10"><path d="M7 1.500L3.500 5 7 8.500"/></svg></button>
      <div class="track"><div class="thumb"></div></div>
      <button class="scroll-right" aria-label="向右滚动"><svg viewBox="0 0 10 10"><path d="M3 1.500L6.500 5 3 8.500"/></svg></button>
    </div>
  </section>
</main>

<footer class="status">
  <span class="cell"></span>
  <output class="cell coords"><span>1679445.351</span><span>5326109.688 米</span></output>
</footer>
<script src="map.js"></script>
</body>
</html>
```
FILE: styles.css
```css
* { box-sizing: border-box; }
body {
  margin: 0;
  min-height: 100vh;
  display: flex;
  flex-direction: column;
  background: #f0f0f0;
  color: #000;
  font: 12px/16px "Noto Sans", "Noto Sans CJK SC", sans-serif;
}
button {
  margin: 0;
  padding: 0;
  border: 0;
  background: none;
  color: inherit;
  font: inherit;
}
svg { display: block; fill: none; }
h1, h2 { margin: 0; font-weight: 400; }

.titlebar {
  display: flex;
  align-items: center;
  height: 29px;
  padding: 0 4px 0 2px;
  background: #4c4a48;
  color: #fff;
}
.app-icon { width: 20px; height: 20px; margin-right: 5px; }
.titlebar h1 { font-size: 15px; line-height: 20px; }
.window-buttons { display: flex; margin-left: auto; }
.window-buttons button { width: 58px; height: 28px; display: grid; place-items: center; }
.window-buttons svg { width: 12px; height: 12px; stroke: #fff; }

.menubar, .docks { background: linear-gradient(90deg, #f0f0f0, #f6f6f6 50%, #fbfbfb); }
.menubar { display: flex; gap: 1px; height: 27px; padding: 6px 0 5px 4px; }
.menubar button { padding: 0 8px; white-space: nowrap; }

.docks { display: flex; flex-direction: column; gap: 1px; padding: 0 0 1px 3px; }
.dock { display: flex; gap: 3px; height: 26px; }
.second { gap: 4px; }
.advanced { padding-left: 356px; height: 25px; }
.toolbar {
  display: flex;
  align-items: center;
  height: 25px;
  border-radius: 3px;
  background: linear-gradient(#fcfcfc, #f7f7f7 50%, #eee);
}
.layout-bar { margin-left: auto; margin-right: 76px; }
.grip {
  width: 2px;
  height: 15px;
  margin: 0 2px 0 3px;
  background: repeating-linear-gradient(#b4b4b4 0 2px, transparent 2px 4px);
}
.tool {
  width: 22px;
  height: 22px;
  display: grid;
  place-items: center;
  flex: none;
  border: 1px solid transparent;
}
.tool svg { width: 16px; height: 16px; }
.tool:disabled svg { stroke: #b4b4b4; }
.node { fill: #acacac; stroke: none; }
.win { fill: #fff; stroke: #4b5563; }
.bar { stroke: #1a5ca8; stroke-width: 3; }
.on { border-color: #0078d7; background: #dce9f5; }
.on-disabled { border-color: #a8b0b8; background: #dce6f0; }
.sep { width: 2px; height: 15px; margin: 0 2px; flex: none; border-left: 1px solid #b4b4b4; }
.drop { width: 11px; height: 22px; display: grid; place-items: center; }
.drop::before, .label::after {
  content: "";
  border: 3px solid transparent;
  border-top-color: #000;
  border-bottom: 0;
}
.drop:disabled::before { border-top-color: #999; }
.label { display: flex; align-items: center; justify-content: space-between; height: 22px; padding: 0 2px 0 5px; white-space: nowrap; }
.editor { width: 67px; }
.network { width: 110px; }
.geo { width: 138px; }
.more {
  width: 11px;
  height: 25px;
  margin-left: 2px;
  padding-top: 16px;
  display: grid;
  justify-items: center;
  align-content: start;
  gap: 2px;
  background: linear-gradient(#f0f0f0, #a0a0a0);
}
.more::before { content: ""; width: 5px; height: 1px; background: #000; box-shadow: 1px 1px #fff; }
.more::after { content: ""; border: 3px solid transparent; border-top-color: #000; border-bottom: 0; }

.combo {
  appearance: none;
  height: 23px;
  padding: 0 3px;
  border: 1px solid #7a7a7a;
  border-radius: 0;
  color: #000;
  font: 13px/16px "Liberation Mono", monospace;
  background: #fff url("data:image/svg+xml,%3Csvg xmlns='http://www.w3.org/2000/svg' width='10' height='6' fill='none' stroke='%23666'%3E%3Cpath d='M.5.5L5 5 9.500.5'/%3E%3C/svg%3E") right 5px center no-repeat;
  opacity: 1;
}
.scale { width: 148px; }
.percent {
  width: 60px;
  border-color: #ccc;
  color: #777;
  background-image: url("data:image/svg+xml,%3Csvg xmlns='http://www.w3.org/2000/svg' width='10' height='6' fill='none' stroke='%23aaa'%3E%3Cpath d='M.5.5L5 5 9.500.5'/%3E%3C/svg%3E"), linear-gradient(#0078d7, #0078d7);
  background-position: right 5px center, 2px 3px;
  background-size: 10px 6px, 33px 15px;
}
.dataset {
  width: 180px;
  height: 20px;
  border-color: #bfbfbf;
  background-color: #ccc;
  background-image: url("data:image/svg+xml,%3Csvg xmlns='http://www.w3.org/2000/svg' width='10' height='6' fill='none' stroke='%23999'%3E%3Cpath d='M.5.5L5 5 9.500.5'/%3E%3C/svg%3E");
}

.workspace { flex: 1; display: flex; gap: 4px; min-height: 0; }
.contents { width: 347px; flex: none; display: flex; flex-direction: column; }
.contents-title {
  display: flex;
  align-items: center;
  height: 22px;
  padding: 0 1px 0 4px;
  background: linear-gradient(90deg, #bccbdc, #d7e4f2);
}
.contents-title h2 { margin-right: auto; font-size: 12px; line-height: 16px; }
.contents-title button { width: 16px; height: 16px; display: grid; place-items: center; }
.contents-title svg { width: 10px; height: 10px; }
.contents-tools { display: flex; align-items: center; height: 26px; padding-left: 4px; background: linear-gradient(#fcfcfc, #eee); }
.tree { flex: 1; width: 346px; padding: 0 0 0 8px; border: 1px solid #828790; background: #fff; }
.node-row { display: flex; align-items: center; height: 24px; font-size: 15px; line-height: 22px; }
.fold { width: 9px; height: 9px; flex: none; border: 1px solid #999; background: linear-gradient(#336, #336) center / 5px 1px no-repeat #f4f4f4; }
.layers { width: 16px; height: 14px; margin: 0 5px 0 6px; }
.child { padding-left: 19px; }
.child input {
  appearance: none;
  width: 11px;
  height: 11px;
  margin: 0 6px 0 8px;
  border: 1px solid #000;
  background: #fff url("data:image/svg+xml,%3Csvg xmlns='http://www.w3.org/2000/svg' width='7' height='7' fill='none' stroke='%23000' stroke-width='2'%3E%3Cpath d='M0 3l3 3 4-5'/%3E%3C/svg%3E") center no-repeat;
}
.child label { padding: 0 1px; background: #0078d7; color: #fff; font-size: 16px; }
.symbol { padding-left: 54px; height: 20px; }
.symbol svg { width: 4px; height: 5px; }

.map-frame {
  flex: 1;
  min-width: 0;
  display: flex;
  flex-direction: column;
  margin-right: 2px;
  border: 1px solid #a0a0a0;
  border-right-color: #e3e3e3;
  border-bottom-color: #e3e3e3;
}
.map-row { flex: 1; display: flex; gap: 2px; }
.map { flex: 1; position: relative; background: #fff; border: 1px solid #696969; border-right-color: #e3e3e3; border-bottom-color: #e3e3e3; }
.map canvas { position: absolute; inset: 0; }
.vscroll { width: 19px; display: flex; flex-direction: column; border-top: 1px solid #696969; }
.vscroll button { height: 16px; display: grid; place-items: center; }
.vscroll svg, .hscroll .scroll-left svg, .hscroll .scroll-right svg { width: 10px; height: 10px; stroke: #555; stroke-width: 2; }
.track { flex: 1; }
.thumb { background: #cdcdcd; }
.vscroll .thumb { height: 31%; margin-right: 1px; }
.hscroll { display: flex; height: 20px; padding-top: 1px; border-left: 1px solid #696969; }
.hscroll button { display: grid; place-items: center; }
.view { width: 17px; height: 14px; }
.hscroll .view svg { width: 8px; height: 8px; }
.current { background: #bcdcf4; }
.view-sep { width: 1px; height: 13px; margin: 0 5px 0 2px; background: #888; }
.scroll-left { width: 17px; height: 18px; border-right: 1px solid #d0d0d0; margin-right: 3px; }
.scroll-right { width: 18px; height: 18px; margin-right: 19px; }
.hscroll .thumb { width: 56%; height: 18px; }

.status { display: flex; justify-content: flex-end; height: 22px; padding-top: 1px; }
.cell { width: 17px; border-left: 1px solid #f8f8f8; border-right: 1px solid #f8f8f8; }
.coords { display: flex; gap: 9px; width: 287px; margin-left: 2px; padding: 4px 0 0 4px; border-right: 0; white-space: nowrap; }
```
FILE: map.js
```js
// Draws the ndvi_point layer: a regular grid of square markers.
const canvas = document.getElementById('points');
const PITCH = 9.453;
const ORIGIN = { x: 117.9, y: 150.9 };

function draw() {
  const box = canvas.parentElement;
  canvas.width = box.clientWidth;
  canvas.height = box.clientHeight;
  const ctx = canvas.getContext('2d');
  for (let y = ORIGIN.y; y + 5 < canvas.height; y += PITCH) {
    for (let x = ORIGIN.x; x + 5 < canvas.width; x += PITCH) {
      const px = Math.round(x);
      const py = Math.round(y);
      ctx.fillRect(px, py, 4, 4);
      ctx.fillRect(px + 1, py - 1, 1, 1);
    }
  }
}

draw();
window.addEventListener('resize', draw);
```
